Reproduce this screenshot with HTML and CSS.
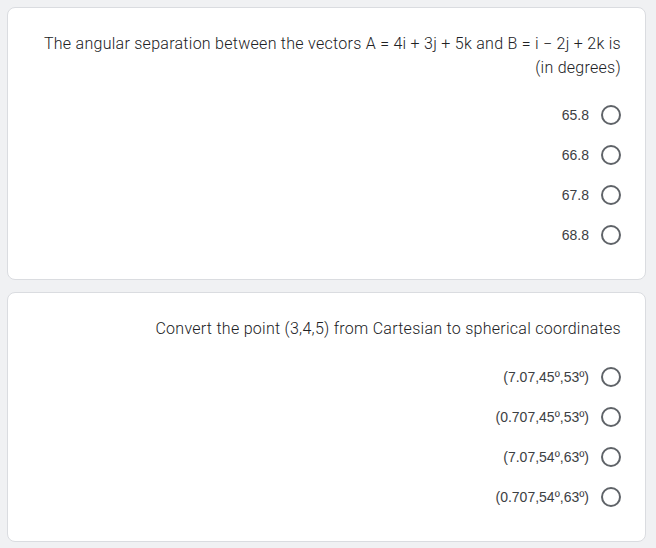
FILE: index.html
```html
<!DOCTYPE html>
<html lang="en">
<head>
<meta charset="utf-8">
<title>Quiz</title>
<link rel="stylesheet" href="styles.css">
</head>
<body>
<main class="page">
  <section class="card">
    <div class="question">The angular separation between the vectors A = 4i + 3j + 5k and B = i − 2j + 2k is (in degrees)</div>
    <div class="options">
      <label class="option"><span class="label">65.8</span><span class="radio"></span></label>
      <label class="option"><span class="label">66.8</span><span class="radio"></span></label>
      <label class="option"><span class="label">67.8</span><span class="radio"></span></label>
      <label class="option"><span class="label">68.8</span><span class="radio"></span></label>
    </div>
  </section>
  <section class="card">
    <div class="question">Convert the point (3,4,5) from Cartesian to spherical coordinates</div>
    <div class="options options-second">
      <label class="option"><span class="label">(7.07,45º,53º)</span><span class="radio"></span></label>
      <label class="option"><span class="label">(0.707,45º,53º)</span><span class="radio"></span></label>
      <label class="option"><span class="label">(7.07,54º,63º)</span><span class="radio"></span></label>
      <label class="option"><span class="label">(0.707,54º,63º)</span><span class="radio"></span></label>
    </div>
  </section>
</main>
</body>
</html>
```
FILE: styles.css
```css
html, body {
  margin: 0;
  padding: 0;
  background: #f0f1f3;
}
.page {
  display: flex;
  flex-direction: column;
  gap: 12px;
  padding: 7px 10px 6px 7px;
}
.card {
  background: #ffffff;
  border: 1px solid #dadce0;
  border-radius: 8px;
  padding: 24px;
}
.question {
  font-family: Roboto, "Liberation Sans", sans-serif;
  font-size: 16px;
  font-weight: 300;
  letter-spacing: 0.27px;
  line-height: 24px;
  color: #202124;
  text-align: right;
}
.options {
  display: flex;
  flex-direction: column;
  margin-top: 15px;
}
.options-second {
  margin-top: 16px;
}
.option {
  display: flex;
  align-items: center;
  justify-content: flex-end;
  gap: 12px;
  height: 40px;
}
.label {
  font-family: "Liberation Sans", Arial, sans-serif;
  font-size: 14px;
  color: #3c4043;
}
.radio {
  width: 16px;
  height: 16px;
  border: 2px solid #5f6368;
  border-radius: 50%;
  box-sizing: content-box;
}
```
